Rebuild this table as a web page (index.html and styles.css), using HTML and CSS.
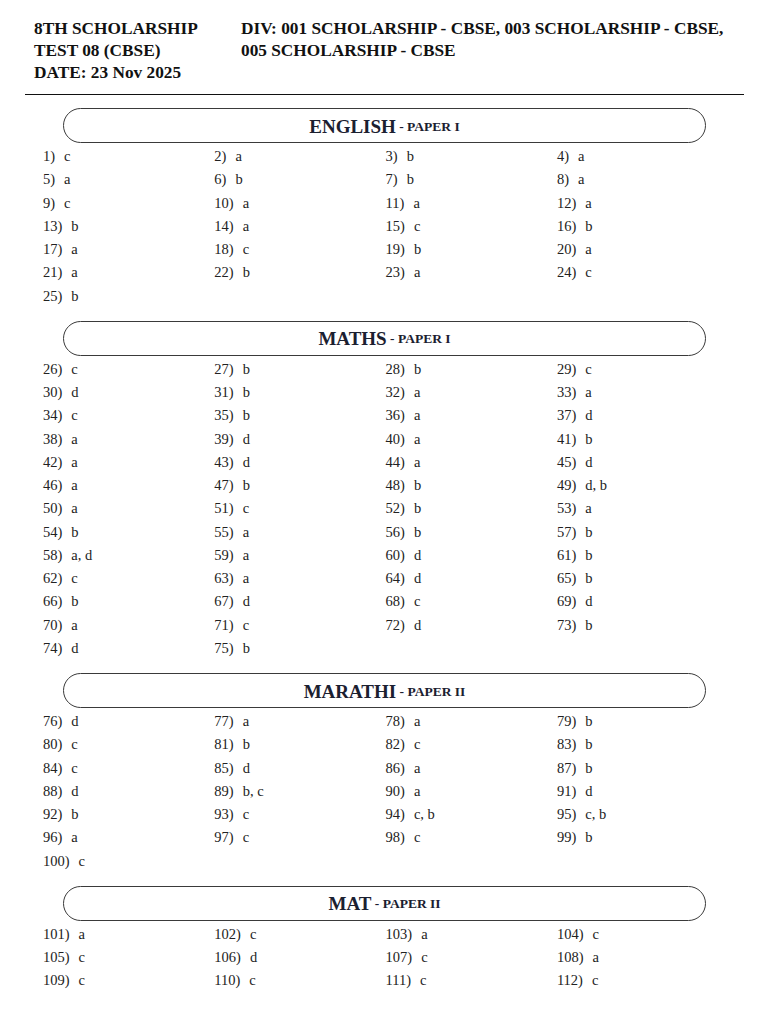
FILE: index.html
```html
<!DOCTYPE html>
<html>
<head>
<meta charset="utf-8">
<link rel="stylesheet" href="styles.css">
</head>
<body>
<div class="page">
  <header class="head">
    <div class="head-left">
      <div>8TH SCHOLARSHIP</div>
      <div>TEST 08 (CBSE)</div>
      <div>DATE: 23 Nov 2025</div>
    </div>
    <div class="head-right">
      <div>DIV: 001 SCHOLARSHIP - CBSE, 003 SCHOLARSHIP - CBSE,</div>
      <div>005 SCHOLARSHIP - CBSE</div>
    </div>
  </header>
  <div class="rule"></div>

  <section class="section">
    <div class="pill"><span class="subj">ENGLISH</span><span class="paper"> - PAPER I</span></div>
    <div class="grid">
      <div class="ans"><span class="n">1)</span>c</div>
      <div class="ans"><span class="n">2)</span>a</div>
      <div class="ans"><span class="n">3)</span>b</div>
      <div class="ans"><span class="n">4)</span>a</div>
      <div class="ans"><span class="n">5)</span>a</div>
      <div class="ans"><span class="n">6)</span>b</div>
      <div class="ans"><span class="n">7)</span>b</div>
      <div class="ans"><span class="n">8)</span>a</div>
      <div class="ans"><span class="n">9)</span>c</div>
      <div class="ans"><span class="n">10)</span>a</div>
      <div class="ans"><span class="n">11)</span>a</div>
      <div class="ans"><span class="n">12)</span>a</div>
      <div class="ans"><span class="n">13)</span>b</div>
      <div class="ans"><span class="n">14)</span>a</div>
      <div class="ans"><span class="n">15)</span>c</div>
      <div class="ans"><span class="n">16)</span>b</div>
      <div class="ans"><span class="n">17)</span>a</div>
      <div class="ans"><span class="n">18)</span>c</div>
      <div class="ans"><span class="n">19)</span>b</div>
      <div class="ans"><span class="n">20)</span>a</div>
      <div class="ans"><span class="n">21)</span>a</div>
      <div class="ans"><span class="n">22)</span>b</div>
      <div class="ans"><span class="n">23)</span>a</div>
      <div class="ans"><span class="n">24)</span>c</div>
      <div class="ans"><span class="n">25)</span>b</div>
    </div>
  </section>

  <section class="section">
    <div class="pill"><span class="subj">MATHS</span><span class="paper"> - PAPER I</span></div>
    <div class="grid">
      <div class="ans"><span class="n">26)</span>c</div>
      <div class="ans"><span class="n">27)</span>b</div>
      <div class="ans"><span class="n">28)</span>b</div>
      <div class="ans"><span class="n">29)</span>c</div>
      <div class="ans"><span class="n">30)</span>d</div>
      <div class="ans"><span class="n">31)</span>b</div>
      <div class="ans"><span class="n">32)</span>a</div>
      <div class="ans"><span class="n">33)</span>a</div>
      <div class="ans"><span class="n">34)</span>c</div>
      <div class="ans"><span class="n">35)</span>b</div>
      <div class="ans"><span class="n">36)</span>a</div>
      <div class="ans"><span class="n">37)</span>d</div>
      <div class="ans"><span class="n">38)</span>a</div>
      <div class="ans"><span class="n">39)</span>d</div>
      <div class="ans"><span class="n">40)</span>a</div>
      <div class="ans"><span class="n">41)</span>b</div>
      <div class="ans"><span class="n">42)</span>a</div>
      <div class="ans"><span class="n">43)</span>d</div>
      <div class="ans"><span class="n">44)</span>a</div>
      <div class="ans"><span class="n">45)</span>d</div>
      <div class="ans"><span class="n">46)</span>a</div>
      <div class="ans"><span class="n">47)</span>b</div>
      <div class="ans"><span class="n">48)</span>b</div>
      <div class="ans"><span class="n">49)</span>d, b</div>
      <div class="ans"><span class="n">50)</span>a</div>
      <div class="ans"><span class="n">51)</span>c</div>
      <div class="ans"><span class="n">52)</span>b</div>
      <div class="ans"><span class="n">53)</span>a</div>
      <div class="ans"><span class="n">54)</span>b</div>
      <div class="ans"><span class="n">55)</span>a</div>
      <div class="ans"><span class="n">56)</span>b</div>
      <div class="ans"><span class="n">57)</span>b</div>
      <div class="ans"><span class="n">58)</span>a, d</div>
      <div class="ans"><span class="n">59)</span>a</div>
      <div class="ans"><span class="n">60)</span>d</div>
      <div class="ans"><span class="n">61)</span>b</div>
      <div class="ans"><span class="n">62)</span>c</div>
      <div class="ans"><span class="n">63)</span>a</div>
      <div class="ans"><span class="n">64)</span>d</div>
      <div class="ans"><span class="n">65)</span>b</div>
      <div class="ans"><span class="n">66)</span>b</div>
      <div class="ans"><span class="n">67)</span>d</div>
      <div class="ans"><span class="n">68)</span>c</div>
      <div class="ans"><span class="n">69)</span>d</div>
      <div class="ans"><span class="n">70)</span>a</div>
      <div class="ans"><span class="n">71)</span>c</div>
      <div class="ans"><span class="n">72)</span>d</div>
      <div class="ans"><span class="n">73)</span>b</div>
      <div class="ans"><span class="n">74)</span>d</div>
      <div class="ans"><span class="n">75)</span>b</div>
    </div>
  </section>

  <section class="section">
    <div class="pill"><span class="subj">MARATHI</span><span class="paper"> - PAPER II</span></div>
    <div class="grid">
      <div class="ans"><span class="n">76)</span>d</div>
      <div class="ans"><span class="n">77)</span>a</div>
      <div class="ans"><span class="n">78)</span>a</div>
      <div class="ans"><span class="n">79)</span>b</div>
      <div class="ans"><span class="n">80)</span>c</div>
      <div class="ans"><span class="n">81)</span>b</div>
      <div class="ans"><span class="n">82)</span>c</div>
      <div class="ans"><span class="n">83)</span>b</div>
      <div class="ans"><span class="n">84)</span>c</div>
      <div class="ans"><span class="n">85)</span>d</div>
      <div class="ans"><span class="n">86)</span>a</div>
      <div class="ans"><span class="n">87)</span>b</div>
      <div class="ans"><span class="n">88)</span>d</div>
      <div class="ans"><span class="n">89)</span>b, c</div>
      <div class="ans"><span class="n">90)</span>a</div>
      <div class="ans"><span class="n">91)</span>d</div>
      <div class="ans"><span class="n">92)</span>b</div>
      <div class="ans"><span class="n">93)</span>c</div>
      <div class="ans"><span class="n">94)</span>c, b</div>
      <div class="ans"><span class="n">95)</span>c, b</div>
      <div class="ans"><span class="n">96)</span>a</div>
      <div class="ans"><span class="n">97)</span>c</div>
      <div class="ans"><span class="n">98)</span>c</div>
      <div class="ans"><span class="n">99)</span>b</div>
      <div class="ans"><span class="n">100)</span>c</div>
    </div>
  </section>

  <section class="section">
    <div class="pill"><span class="subj">MAT</span><span class="paper"> - PAPER II</span></div>
    <div class="grid">
      <div class="ans"><span class="n">101)</span>a</div>
      <div class="ans"><span class="n">102)</span>c</div>
      <div class="ans"><span class="n">103)</span>a</div>
      <div class="ans"><span class="n">104)</span>c</div>
      <div class="ans"><span class="n">105)</span>c</div>
      <div class="ans"><span class="n">106)</span>d</div>
      <div class="ans"><span class="n">107)</span>c</div>
      <div class="ans"><span class="n">108)</span>a</div>
      <div class="ans"><span class="n">109)</span>c</div>
      <div class="ans"><span class="n">110)</span>c</div>
      <div class="ans"><span class="n">111)</span>c</div>
      <div class="ans"><span class="n">112)</span>c</div>
    </div>
  </section>
</div>
</body>
</html>
```

FILE: styles.css
```css
html, body {
  margin: 0;
  padding: 0;
  background: #ffffff;
}

.page {
  width: 768px;
  font-family: "Liberation Serif", "Times New Roman", serif;
  color: #222222;
}

.head {
  display: flex;
  padding: 18px 0 0 34px;
  font-weight: bold;
  font-size: 17.3px;
  line-height: 22px;
  color: #111111;
}

.head-left {
  width: 207px;
}

.rule {
  margin: 10px 24px 0 25px;
  border-top: 1.5px solid #111111;
}

.section {
  padding: 0 40px 0 43px;
}

.section:first-of-type {
  padding-top: 13px;
}

.pill {
  margin: 0 22px 2px 20px;
  height: 31px;
  border: 1.6px solid #3a3a3a;
  border-radius: 18px;
  display: flex;
  align-items: center;
  justify-content: center;
  font-weight: bold;
  color: #1b2030;
  padding-top: 2px;
  box-sizing: content-box;
}

.subj {
  font-size: 19px;
}

.paper {
  font-size: 13.5px;
  white-space: pre;
}

.grid {
  display: grid;
  grid-template-columns: repeat(4, 171.3px);
  font-size: 14.5px;
  line-height: 23.25px;
  padding-bottom: 13px;
}

.ans {
  white-space: nowrap;
}

.n {
  margin-right: 9px;
}
```
